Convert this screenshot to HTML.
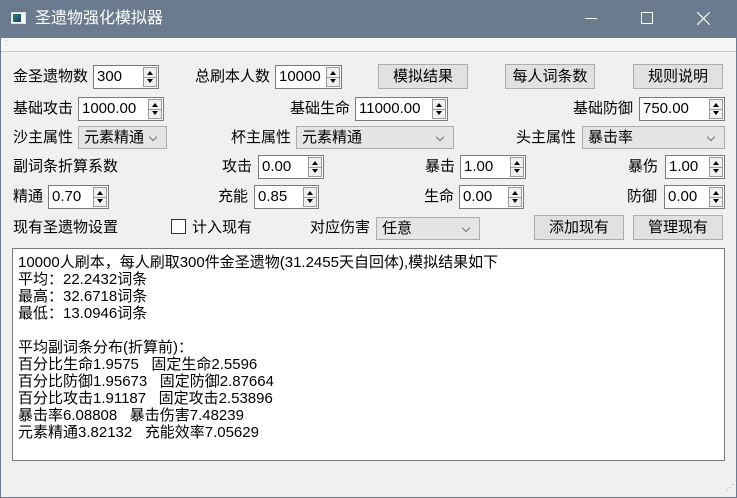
<!DOCTYPE html>
<html><head><meta charset="utf-8"><style>
*{box-sizing:border-box;margin:0;padding:0}
body{width:737px;height:498px;overflow:hidden;background:#f0f0f0;font-family:"Liberation Sans","Noto Sans CJK SC","WenQuanYi Zen Hei",sans-serif;font-size:15px;color:#000;position:relative}
.win{position:absolute;left:0;top:0;width:737px;height:498px;border:1px solid #6b7b8f}
.title{position:absolute;left:0;top:0;width:737px;height:38px;background:#6b7b8f;color:#fff}
.a{position:absolute;white-space:nowrap;line-height:20px}
.spin{position:absolute;background:#fff;border:1px solid #7a7a7a;font-size:15px;line-height:22px;padding-left:3px}
.spin .b{position:absolute;right:1px;top:1px;bottom:1px;width:14px;border:1px solid #999;background:#f0f0f0}
.spin .b:before{content:"";position:absolute;left:3px;top:3px;border:3px solid transparent;border-bottom:4px solid #000;border-top:0}
.spin .b:after{content:"";position:absolute;left:3px;bottom:3px;border:3px solid transparent;border-top:4px solid #000;border-bottom:0}
.spin .b i{position:absolute;left:0;right:0;top:50%;border-top:1px solid #999}
.btn{position:absolute;background:#e1e1e1;border:1px solid #adadad;text-align:center;line-height:23px}
.cb{position:absolute;background:#e5e5e5;border:1px solid #adadad;padding-left:5px;line-height:21px}
.cb:after{content:"";position:absolute;right:10px;top:7px;width:5px;height:5px;border-right:1px solid #777;border-bottom:1px solid #777;transform:rotate(45deg)}
.txt{position:absolute;left:12px;top:248px;width:713px;height:213px;background:#fff;border:1px solid #7a7a7a;padding:5px 0 0 5px;line-height:17px;font-size:15px;white-space:pre}
</style></head><body>
<div class="win"></div>
<div class="title">
<div style="position:absolute;left:11px;top:12px;width:15px;height:12px;background:#fff;border:1px solid #ddd"><div style="position:absolute;left:1px;top:1px;width:8px;height:8px;background:linear-gradient(135deg,#2a8a5a,#1a3a8a)"></div></div>
<div class="a" style="left:35px;top:9px;font-size:16px">圣遗物强化模拟器</div>
<div style="position:absolute;left:585px;top:18px;width:12px;border-top:1px solid #fff"></div>
<div style="position:absolute;left:641px;top:12px;width:12px;height:12px;border:1px solid #fff"></div>
<svg style="position:absolute;left:697px;top:12px" width="13" height="13"><path d="M0 0L13 13M13 0L0 13" stroke="#fff" stroke-width="1.2"/></svg>
</div>
<div style="position:absolute;left:1px;top:38px;width:735px;height:14px;background:#f5f5f5;border-bottom:1px solid #c8c8c8"></div>
<div class="a" style="left:5px;top:39px;font-size:8px;color:#999;line-height:8px">:</div>

<div class="a" style="left:13px;top:67px">金圣遗物数</div>
<div class="spin" style="left:93px;top:65px;width:66px;height:24px">300<div class="b"><i></i></div></div>
<div class="a" style="left:195px;top:67px">总刷本人数</div>
<div class="spin" style="left:275px;top:65px;width:67px;height:24px">10000<div class="b"><i></i></div></div>
<div class="btn" style="left:378px;top:64px;width:90px;height:25px">模拟结果</div>
<div class="btn" style="left:505px;top:64px;width:90px;height:25px">每人词条数</div>
<div class="btn" style="left:633px;top:64px;width:90px;height:25px">规则说明</div>

<div class="a" style="left:13px;top:99px">基础攻击</div>
<div class="spin" style="left:78px;top:97px;width:86px;height:24px">1000.00<div class="b"><i></i></div></div>
<div class="a" style="left:290px;top:99px">基础生命</div>
<div class="spin" style="left:355px;top:97px;width:93px;height:24px">11000.00<div class="b"><i></i></div></div>
<div class="a" style="left:573px;top:99px">基础防御</div>
<div class="spin" style="left:639px;top:97px;width:86px;height:24px">750.00<div class="b"><i></i></div></div>

<div class="a" style="left:13px;top:128px">沙主属性</div>
<div class="cb" style="left:78px;top:126px;width:89px;height:23px">元素精通</div>
<div class="a" style="left:231px;top:128px">杯主属性</div>
<div class="cb" style="left:296px;top:126px;width:158px;height:23px">元素精通</div>
<div class="a" style="left:516px;top:128px">头主属性</div>
<div class="cb" style="left:582px;top:126px;width:143px;height:23px">暴击率</div>

<div class="a" style="left:13px;top:157px">副词条折算系数</div>
<div class="a" style="left:222px;top:157px">攻击</div>
<div class="spin" style="left:258px;top:155px;width:66px;height:24px">0.00<div class="b"><i></i></div></div>
<div class="a" style="left:425px;top:157px">暴击</div>
<div class="spin" style="left:460px;top:155px;width:66px;height:24px">1.00<div class="b"><i></i></div></div>
<div class="a" style="left:628px;top:157px">暴伤</div>
<div class="spin" style="left:665px;top:155px;width:60px;height:24px">1.00<div class="b"><i></i></div></div>

<div class="a" style="left:13px;top:187px">精通</div>
<div class="spin" style="left:48px;top:185px;width:61px;height:24px">0.70<div class="b"><i></i></div></div>
<div class="a" style="left:218px;top:187px">充能</div>
<div class="spin" style="left:254px;top:185px;width:65px;height:24px">0.85<div class="b"><i></i></div></div>
<div class="a" style="left:424px;top:187px">生命</div>
<div class="spin" style="left:459px;top:185px;width:65px;height:24px">0.00<div class="b"><i></i></div></div>
<div class="a" style="left:627px;top:187px">防御</div>
<div class="spin" style="left:664px;top:185px;width:61px;height:24px">0.00<div class="b"><i></i></div></div>

<div class="a" style="left:13px;top:218px">现有圣遗物设置</div>
<div style="position:absolute;left:171px;top:219px;width:15px;height:15px;background:#fff;border:1px solid #333"></div>
<div class="a" style="left:192px;top:218px">计入现有</div>
<div class="a" style="left:310px;top:218px">对应伤害</div>
<div class="cb" style="left:376px;top:217px;width:104px;height:23px">任意</div>
<div class="btn" style="left:534px;top:215px;width:90px;height:25px">添加现有</div>
<div class="btn" style="left:633px;top:215px;width:90px;height:25px">管理现有</div>

<div class="txt">10000人刷本，每人刷取300件金圣遗物(31.2455天自回体),模拟结果如下
平均：22.2432词条
最高：32.6718词条
最低：13.0946词条

平均副词条分布(折算前)：
百分比生命1.9575   固定生命2.5596
百分比防御1.95673   固定防御2.87664
百分比攻击1.91187   固定攻击2.53896
暴击率6.08808   暴击伤害7.48239
元素精通3.82132   充能效率7.05629</div>
<div class="a" style="left:726px;top:484px;font-size:8px;color:#999;line-height:8px">⋰</div>
</body></html>
